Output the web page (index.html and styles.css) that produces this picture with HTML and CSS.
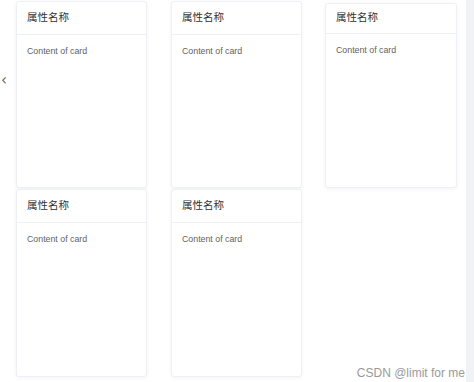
FILE: index.html
```html
<!DOCTYPE html>
<html lang="en">
<head>
  <meta charset="UTF-8" />
  <title>Cards</title>
  <link rel="stylesheet" href="styles.css">
</head>
<body>
  <div class="page">
    <div class="arrow-col">
      <span class="arrow">&lsaquo;</span>
    </div>

    <div class="card-grid">
      <div class="card">
        <div class="card-header">属性名称</div>
        <div class="card-body">Content of card</div>
      </div>
      <div class="card">
        <div class="card-header">属性名称</div>
        <div class="card-body">Content of card</div>
      </div>
      <div class="card card-short">
        <div class="card-header">属性名称</div>
        <div class="card-body">Content of card</div>
      </div>
      <div class="card">
        <div class="card-header">属性名称</div>
        <div class="card-body">Content of card</div>
      </div>
      <div class="card">
        <div class="card-header">属性名称</div>
        <div class="card-body">Content of card</div>
      </div>
    </div>

    <div class="spacer"></div>
    <div class="scroll-track"></div>

    <div class="watermark">CSDN @limit for me</div>
  </div>
</body>
</html>
```

FILE: styles.css
```css
* {
  margin: 0;
  padding: 0;
  box-sizing: border-box;
}
body {
  background: #fff;
  font-family: "Noto Sans", "Noto Sans CJK SC", sans-serif;
  overflow: hidden;
}
.page {
  position: relative;
  display: flex;
  height: 382px;
}
.arrow-col {
  width: 16px;
  flex-shrink: 0;
  padding-top: 68px;
  padding-left: 1px;
}
.arrow {
  font-family: "DejaVu Sans", sans-serif;
  font-size: 15px;
  color: #606266;
  line-height: 20px;
}
.card-grid {
  display: grid;
  grid-template-columns: 131px 131px 131px;
  grid-template-rows: 187px 188px;
  column-gap: 24px;
  row-gap: 1px;
  margin-top: 1px;
}
.card {
  background: #fff;
  border: 1px solid #edf0f5;
  border-radius: 3px;
  box-shadow: 0 1px 4px rgba(0, 0, 0, 0.05);
  overflow: hidden;
}
.card-short {
  margin-top: 2px;
  margin-left: -1px;
}
.card-short .card-header {
  height: 30px;
  padding-top: 5px;
}
.card-header {
  height: 33px;
  padding: 7px 10px 0;
  border-bottom: 1px solid #eef0f4;
  font-family: "Noto Sans CJK SC", sans-serif;
  font-size: 10.5px;
  line-height: 16px;
  color: #303133;
}
.card-body {
  padding: 9px 10px;
  font-family: "Liberation Sans", Arial, sans-serif;
  font-size: 8.8px;
  line-height: 14px;
  color: #606266;
}
.spacer {
  flex: 1;
}
.scroll-track {
  width: 8px;
  flex-shrink: 0;
  background: #f0f2f6;
}
.watermark {
  position: absolute;
  right: 9px;
  bottom: 2px;
  font-family: "Liberation Sans", Arial, sans-serif;
  font-size: 12px;
  color: #9a9a9a;
}
```
